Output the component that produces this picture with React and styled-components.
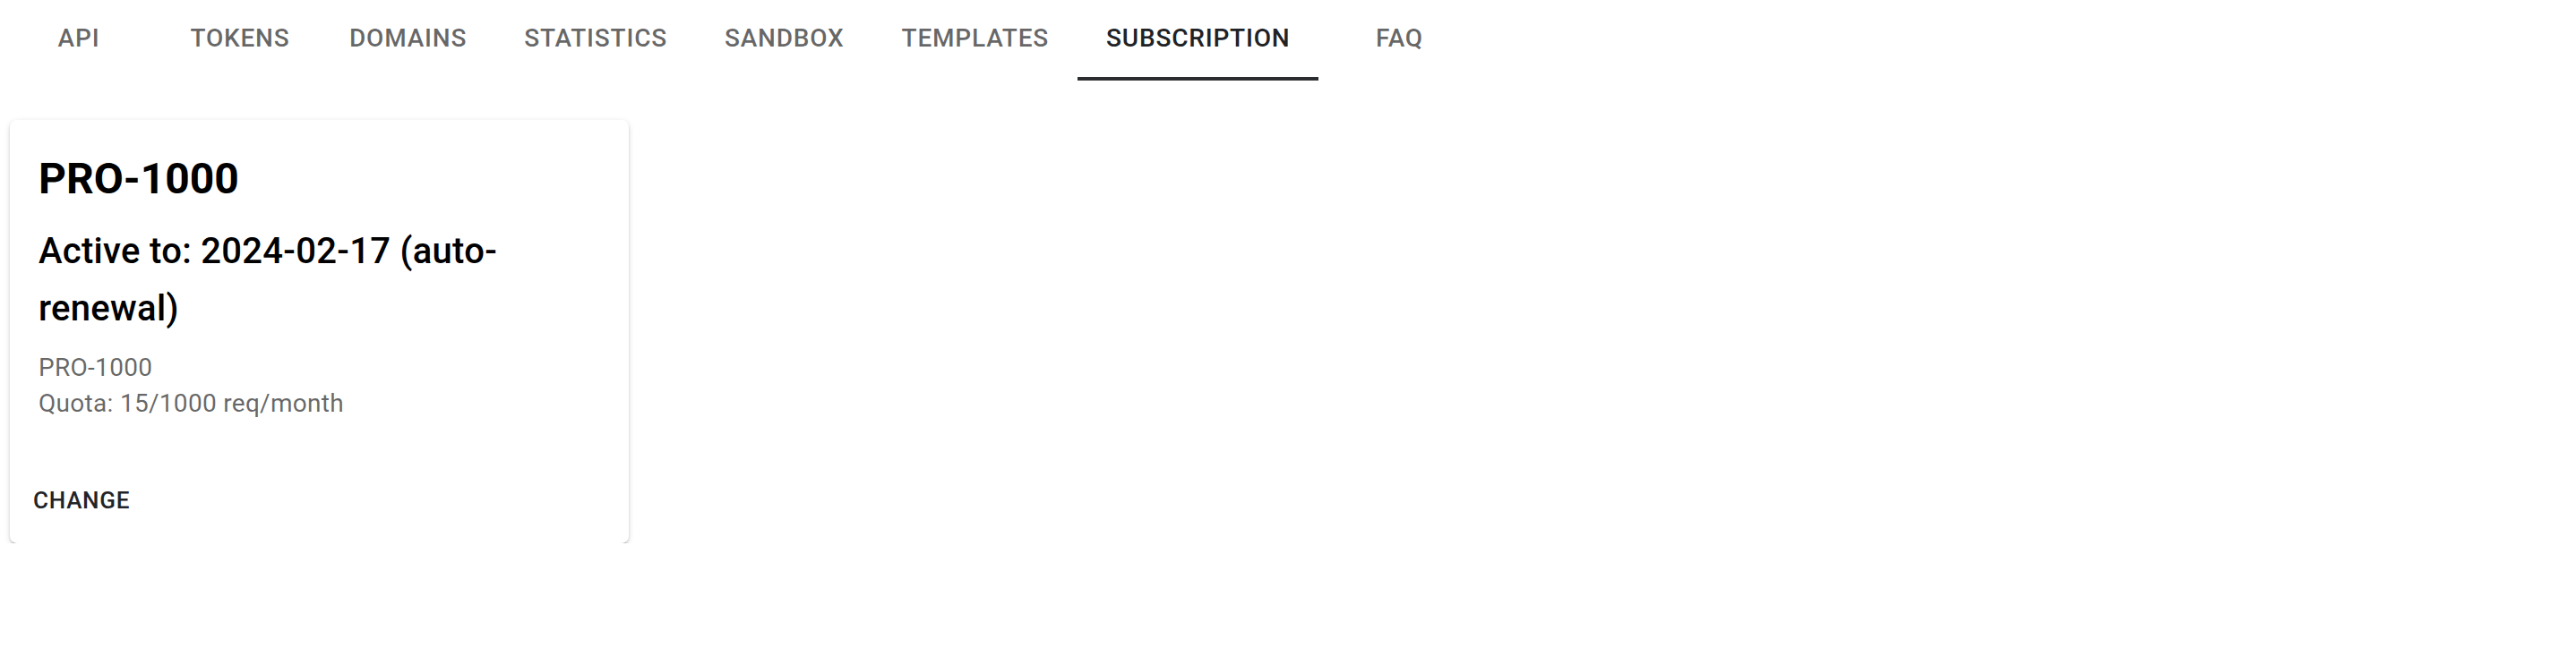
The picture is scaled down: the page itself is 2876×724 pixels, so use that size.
import styled, { createGlobalStyle } from "styled-components";

const tabs = [
  "API",
  "TOKENS",
  "DOMAINS",
  "STATISTICS",
  "SANDBOX",
  "TEMPLATES",
  "SUBSCRIPTION",
  "FAQ",
];

const GlobalStyle = createGlobalStyle`
  body {
    margin: 0;
    background: #ffffff;
    font-family: Roboto, "Liberation Sans", Arial, sans-serif;
  }
`;

const Page = styled.div`
  display: flex;
  flex-direction: column;
  align-items: flex-start;
`;

const TabBar = styled.nav`
  display: flex;
  height: 90px;
  margin-left: -2px;
`;

const Tab = styled.button`
  box-sizing: border-box;
  height: 90px;
  min-width: 180px;
  padding: 0 32px 2px;
  display: flex;
  align-items: center;
  justify-content: center;
  background: none;
  border: none;
  border-bottom: 4px solid ${(p) => (p.$active ? "#2b2d31" : "transparent")};
  font-family: Roboto, "Liberation Sans", Arial, sans-serif;
  font-size: 28px;
  font-weight: 500;
  line-height: 35px;
  letter-spacing: 0.8px;
  text-transform: uppercase;
  color: ${(p) => (p.$active ? "#202226" : "rgba(0, 0, 0, 0.6)")};
  cursor: pointer;
`;

const Card = styled.section`
  box-sizing: border-box;
  width: 691px;
  margin: 44px 0 0 11px;
  background: #ffffff;
  border-radius: 8px;
  box-shadow: 0 5px 2px -3px rgba(0, 0, 0, 0.24), 0 2px 3px 0 rgba(0, 0, 0, 0.14),
    0 2px 7px 0 rgba(0, 0, 0, 0.12);
  display: flex;
  flex-direction: column;
`;

const CardContent = styled.div`
  padding: 34px 32px 42px;
`;

const Title = styled.h2`
  margin: 0 0 17px;
  font-size: 48px;
  font-weight: 700;
  line-height: 64px;
  color: #000000;
`;

const Subtitle = styled.h3`
  margin: 0 0 14px;
  font-size: 40px;
  font-weight: 500;
  line-height: 64px;
  letter-spacing: 0.3px;
  color: #000000;
`;

const Details = styled.p`
  margin: 0;
  font-size: 28px;
  font-weight: 400;
  line-height: 40px;
  letter-spacing: 0.3px;
  color: rgba(0, 0, 0, 0.6);
`;

const CardActions = styled.div`
  display: flex;
  align-items: center;
  padding: 16px;
`;

const TextButton = styled.button`
  padding: 8px 10px;
  background: none;
  border: none;
  border-radius: 8px;
  font-family: Roboto, "Liberation Sans", Arial, sans-serif;
  font-size: 26px;
  font-weight: 500;
  line-height: 45.5px;
  letter-spacing: 0.74px;
  text-transform: uppercase;
  color: #222428;
  cursor: pointer;
`;

export default function App() {
  return (
    <>
      <GlobalStyle />
      <Page>
        <TabBar>
          {tabs.map((t) => (
            <Tab key={t} $active={t === "SUBSCRIPTION"}>
              {t}
            </Tab>
          ))}
        </TabBar>

        <Card>
          <CardContent>
            <Title>PRO-1000</Title>
            <Subtitle>Active to: 2024-02-17 (auto-renewal)</Subtitle>
            <Details>
              PRO-1000
              <br />
              Quota: 15/1000 req/month
            </Details>
          </CardContent>
          <CardActions>
            <TextButton>Change</TextButton>
          </CardActions>
        </Card>
      </Page>
    </>
  );
}
